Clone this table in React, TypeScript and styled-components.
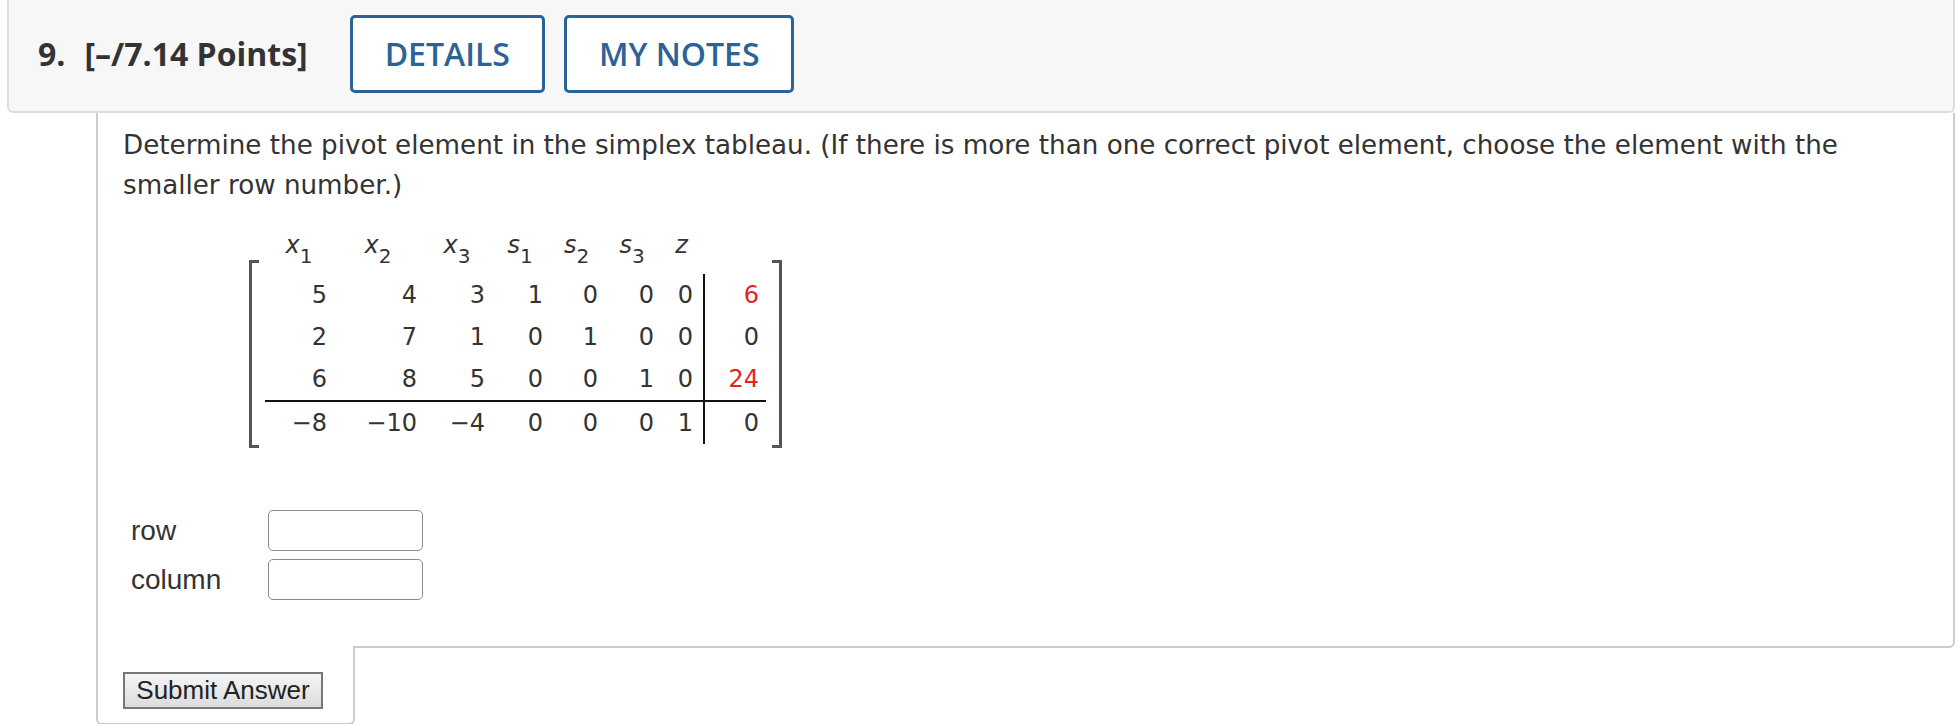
import React from "react";
import styled, { createGlobalStyle } from "styled-components";

const GlobalStyle = createGlobalStyle`
  html, body { margin: 0; padding: 0; background: #ffffff; }
  body { font-family: "DejaVu Sans", Verdana, sans-serif; color: #333333; }
`;

const Page = styled.div`
  padding: 0 3px 0 7px;
`;

const Header = styled.div`
  background: #f7f7f7;
  border: 2px solid #dddddd;
  border-top: none;
  border-radius: 0 0 6px 6px;
  display: flex;
  align-items: center;
  padding: 0 0 4px 29px;
  box-sizing: content-box;
  height: 107px;
`;

const Title = styled.div`
  font-family: "Open Sans", sans-serif;
  font-weight: 700;
  font-size: 32px;
  color: #333333;
  display: flex;
  align-items: baseline;
  margin-right: 42px;
  white-space: nowrap;
`;

const Num = styled.span`
  margin-right: 19px;
`;

const Buttons = styled.div`
  display: flex;
  gap: 19px;
`;

const HeadButton = styled.button`
  height: 78px;
  padding: 0 32px;
  border: 3px solid #2b6397;
  border-radius: 5px;
  background: #ffffff;
  color: #2b6397;
  font-family: "Open Sans", sans-serif;
  font-weight: 600;
  font-size: 32px;
  box-sizing: border-box;
  cursor: pointer;
`;

const Body = styled.div`
  margin-left: 89px;
  border: 2px solid #cccccc;
  border-top: none;
  border-radius: 0 0 6px 0;
  padding: 12px 60px 46px 25px;
`;

const Question = styled.p`
  margin: 0;
  font-family: "DejaVu Sans", Verdana, sans-serif;
  font-size: 26.2px;
  line-height: 40px;
  color: #333333;
`;

const Tableau = styled.div`
  display: flex;
  align-items: flex-start;
  margin: 25px 0 0 126px;
`;

const Bracket = styled.div<{ $side: "left" | "right" }>`
  width: 7px;
  height: 182px;
  margin-top: 30px;
  border: 3px solid #555555;
  ${(p) => (p.$side === "left" ? "border-right: none; margin-right: 6px;" : "border-left: none; margin-left: 6px;")}
`;

const Grid = styled.div`
  display: flex;
  flex-direction: column;
`;

const COLS = "68px 90px 68px 58px 55px 56px 43px 63px";

const Row = styled.div<{ $total?: boolean }>`
  display: grid;
  grid-template-columns: ${COLS};
  border-top: ${(p) => (p.$total ? "2px solid #111111" : "none")};
`;

const HeadCell = styled.div`
  height: 44px;
  line-height: 30px;
  text-align: center;
  font-family: "DejaVu Sans", Verdana, sans-serif;
  font-size: 24px;
  color: #333333;
`;

const Var = styled.i`
  font-style: oblique;
`;

const Sub = styled.span`
  font-size: 20px;
  vertical-align: -10px;
  line-height: 0;
`;

const Cell = styled.div<{ $pad: number; $bar?: boolean; $red?: boolean }>`
  height: 42px;
  line-height: 42px;
  text-align: right;
  padding-right: ${(p) => p.$pad}px;
  font-family: "DejaVu Sans", Verdana, sans-serif;
  font-size: 24px;
  color: ${(p) => (p.$red ? "#e3261c" : "#333333")};
  border-left: ${(p) => (p.$bar ? "2px solid #111111" : "none")};
`;

const Answers = styled.div`
  display: grid;
  grid-template-columns: 137px 155px;
  row-gap: 8px;
  margin: 62px 0 0 8px;
`;

const Label = styled.label`
  font-family: "Liberation Sans", Arial, sans-serif;
  font-size: 28px;
  color: #333333;
  line-height: 42px;
  height: 41px;
`;

const Input = styled.input`
  width: 155px;
  height: 41px;
  box-sizing: border-box;
  border: 1.5px solid #8a8a8a;
  border-radius: 5px;
  background: #ffffff;
  padding: 0 8px;
  font-size: 22px;
`;

const Footer = styled.div`
  margin-left: 89px;
  display: flex;
`;

const SubmitTab = styled.div`
  width: 259px;
  margin-top: -2px;
  background: #ffffff;
  border: 2px solid #cccccc;
  border-top: none;
  border-radius: 0 0 6px 6px;
  padding: 26px 0 14px 25px;
  box-sizing: border-box;
`;

const SubmitButton = styled.button`
  width: 200px;
  height: 37px;
  box-sizing: border-box;
  border: 2px solid #777777;
  border-radius: 0;
  background: linear-gradient(#f5f5f5, #dcdcdc);
  font-family: "Liberation Sans", Arial, sans-serif;
  font-size: 26px;
  color: #222222;
  padding: 0;
  line-height: 31px;
  cursor: pointer;
`;

const headers: [string, string][] = [
  ["x", "1"],
  ["x", "2"],
  ["x", "3"],
  ["s", "1"],
  ["s", "2"],
  ["s", "3"],
  ["z", ""],
  ["", ""],
];

const rows: { v: string[]; red: boolean[] }[] = [
  { v: ["5", "4", "3", "1", "0", "0", "0", "6"], red: [false, false, false, false, false, false, false, true] },
  { v: ["2", "7", "1", "0", "1", "0", "0", "0"], red: [] },
  { v: ["6", "8", "5", "0", "0", "1", "0", "24"], red: [false, false, false, false, false, false, false, true] },
  { v: ["\u22128", "\u221210", "\u22124", "0", "0", "0", "1", "0"], red: [] },
];

const pads = [6, 6, 6, 6, 6, 6, 10, 7];

export default function App() {
  return (
    <>
      <GlobalStyle />
      <Page>
        <Header>
          <Title>
            <Num>9.</Num>
            <span>[–/7.14 Points]</span>
          </Title>
          <Buttons>
            <HeadButton>DETAILS</HeadButton>
            <HeadButton>MY NOTES</HeadButton>
          </Buttons>
        </Header>
        <Body>
          <Question>
            Determine the pivot element in the simplex tableau. (If there is more than one correct pivot element, choose
            the element with the smaller row number.)
          </Question>
          <Tableau>
            <Bracket $side="left" />
            <Grid>
              <Row>
                {headers.map(([v, s], i) => (
                  <HeadCell key={i}>
                    {v && <Var>{v}</Var>}
                    {s && <Sub>{s}</Sub>}
                  </HeadCell>
                ))}
              </Row>
              {rows.map((r, ri) => (
                <Row key={ri} $total={ri === 3}>
                  {r.v.map((val, ci) => (
                    <Cell key={ci} $pad={pads[ci]} $bar={ci === 7} $red={!!r.red[ci]}>
                      {val}
                    </Cell>
                  ))}
                </Row>
              ))}
            </Grid>
            <Bracket $side="right" />
          </Tableau>
          <Answers>
            <Label htmlFor="row-in">row</Label>
            <Input id="row-in" type="text" />
            <Label htmlFor="col-in">column</Label>
            <Input id="col-in" type="text" />
          </Answers>
        </Body>
        <Footer>
          <SubmitTab>
            <SubmitButton>Submit Answer</SubmitButton>
          </SubmitTab>
        </Footer>
      </Page>
    </>
  );
}
